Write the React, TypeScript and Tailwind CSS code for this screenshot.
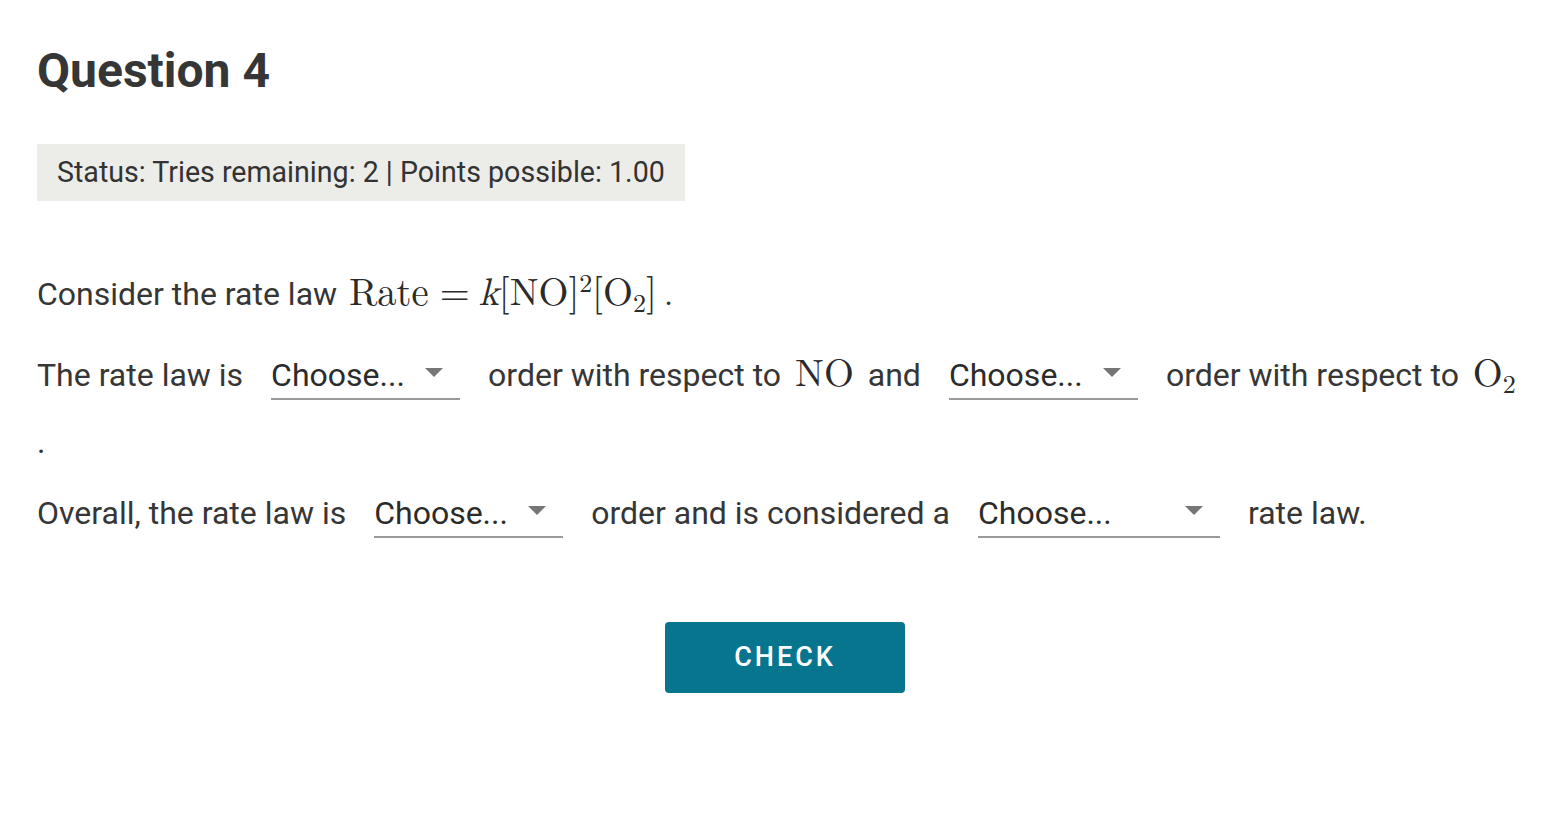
import React from "react";

const SERIF = "font-['Latin_Modern_Math','Liberation_Serif',serif]";

function Choose({ width }: { width: number }) {
  return (
    <span
      className="mx-[28px] inline-flex items-center justify-between border-b-2 border-[#9a9a9a] pb-[5px] pr-[17px] leading-[36px] text-[#2b2b2b]"
      style={{ width }}
    >
      <span>Choose...</span>
      <svg width="18" height="9" viewBox="0 0 18 9" className="mb-[6px]">
        <path d="M0 0 L18 0 L9 9 Z" fill="#767676" />
      </svg>
    </span>
  );
}

function M({ children }: { children: React.ReactNode }) {
  return (
    <span className={`${SERIF} mx-[6px] text-[38.5px] leading-none text-[#2b2b2b]`}>
      {children}
    </span>
  );
}

export default function App() {
  return (
    <div className="min-h-screen bg-white pl-[37px] pr-[23px] pt-[47px] font-['Roboto','Liberation_Sans',sans-serif] text-[#363636]">
      <h1 className="text-[48px] font-bold leading-none text-[#363636]">
        Question 4
      </h1>

      <div className="mt-[49px] flex h-[57px] w-fit items-center bg-[#ecece8] px-[20px] text-[28.6px] text-[#333]">
        Status: Tries remaining: 2 | Points possible: 1.00
      </div>

      <p className="mt-[73px] text-[32px] leading-[40px]">
        Consider the rate law{" "}
        <span className={`${SERIF} ml-[4px] text-[38.5px] leading-none text-[#2b2b2b]`}>
          Rate<span className="ml-[11px] mr-[9px]">=</span>
          <i>k</i>[NO]<sup className="text-[26px]">2</sup>[O<sub className="text-[26px]">2</sub>]
        </span>{" "}
        .
      </p>

      <p className="mt-[28px] text-[32px] leading-[67px]">
        The rate law is
        <Choose width={189} />
        order with respect to <M>NO</M> and
        <Choose width={189} />
        order with respect to{" "}
        <M>
          O<sub className="text-[26px]">2</sub>
        </M>
        <br />.
      </p>

      <p className="mt-[7px] text-[32px] leading-[61px]">
        Overall, the rate law is
        <Choose width={189} />
        order and is considered a
        <Choose width={242} />
        rate law.
      </p>

      <div className="mt-[78px] flex justify-center">
        <button
          type="button"
          className="h-[71px] w-[240px] rounded-[4px] bg-[#08758f] text-[27px] font-medium tracking-[3px] text-white"
        >
          CHECK
        </button>
      </div>
    </div>
  );
}
